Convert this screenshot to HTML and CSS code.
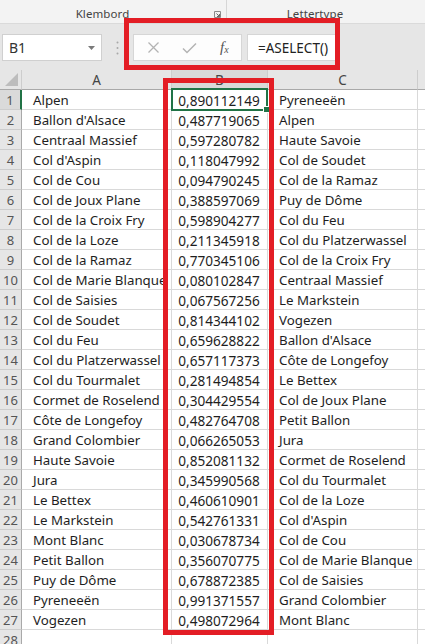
FILE: index.html
```html
<!DOCTYPE html>
<html lang="nl">
<head>
<meta charset="utf-8">
<title>Excel</title>
<link rel="stylesheet" href="styles.css">
</head>
<body>
<div class="app">
  <div class="ribbon">
    <div class="group g-clip">
      <span class="glabel">Klembord</span>
      <svg class="launcher" width="7" height="7" viewBox="0 0 7 7"><path d="M0.5 6.5V0.5H6.5V6.5Z" fill="none" stroke="#8a8a8a" stroke-width="1"/><path d="M2.5 2.5L5.5 5.5M5.5 3V5.5H3" fill="none" stroke="#6a6a6a" stroke-width="1"/></svg>
    </div>
    <div class="group g-font"><span class="glabel">Lettertype</span></div>
  </div>

  <div class="fbar">
    <div class="namebox">
      <span class="nb-text">B1</span>
      <svg class="nb-arrow" width="7" height="4" viewBox="0 0 7 4"><path d="M0 0H7L3.5 4Z" fill="#7a7a7a"/></svg>
    </div>
    <svg class="grip" width="3" height="14" viewBox="0 0 3 14"><circle cx="1.5" cy="1.5" r="1" fill="#a8a8a8"/><circle cx="1.5" cy="7" r="1" fill="#a8a8a8"/><circle cx="1.5" cy="12.5" r="1" fill="#a8a8a8"/></svg>
    <div class="fbtns">
      <svg class="fb-icon" width="13" height="13" viewBox="0 0 13 13"><path d="M1.5 1.5L11.5 11.5M11.5 1.5L1.5 11.5" stroke="#b3b3b3" stroke-width="1.3" fill="none"/></svg>
      <svg class="fb-icon" width="15" height="12" viewBox="0 0 15 12"><path d="M1 6.5L5 10.5L14 1.5" stroke="#b3b3b3" stroke-width="1.5" fill="none"/></svg>
      <span class="fx"><i>f</i><sub>x</sub></span>
    </div>
    <div class="finput">=ASELECT()</div>
  </div>

  <div class="sheet">
    <div class="corner"><svg width="13" height="13" viewBox="0 0 13 13"><path d="M13 0V13H0Z" fill="#bdbdbd"/></svg></div>
    <div class="colhead">A</div>
    <div class="colhead sel">B</div>
    <div class="colhead">C</div>
    <div class="colhead last"></div>

    <div class="rowhead sel">1</div><div class="cell txt">Alpen</div><div class="cell num active">0,890112149</div><div class="cell txt">Pyreneeën</div><div class="cell last"></div>
    <div class="rowhead">2</div><div class="cell txt">Ballon d'Alsace</div><div class="cell num">0,487719065</div><div class="cell txt">Alpen</div><div class="cell last"></div>
    <div class="rowhead">3</div><div class="cell txt">Centraal Massief</div><div class="cell num">0,597280782</div><div class="cell txt">Haute Savoie</div><div class="cell last"></div>
    <div class="rowhead">4</div><div class="cell txt">Col d'Aspin</div><div class="cell num">0,118047992</div><div class="cell txt">Col de Soudet</div><div class="cell last"></div>
    <div class="rowhead">5</div><div class="cell txt">Col de Cou</div><div class="cell num">0,094790245</div><div class="cell txt">Col de la Ramaz</div><div class="cell last"></div>
    <div class="rowhead">6</div><div class="cell txt">Col de Joux Plane</div><div class="cell num">0,388597069</div><div class="cell txt">Puy de Dôme</div><div class="cell last"></div>
    <div class="rowhead">7</div><div class="cell txt">Col de la Croix Fry</div><div class="cell num">0,598904277</div><div class="cell txt">Col du Feu</div><div class="cell last"></div>
    <div class="rowhead">8</div><div class="cell txt">Col de la Loze</div><div class="cell num">0,211345918</div><div class="cell txt">Col du Platzerwassel</div><div class="cell last"></div>
    <div class="rowhead">9</div><div class="cell txt">Col de la Ramaz</div><div class="cell num">0,770345106</div><div class="cell txt">Col de la Croix Fry</div><div class="cell last"></div>
    <div class="rowhead">10</div><div class="cell txt">Col de Marie Blanque</div><div class="cell num">0,080102847</div><div class="cell txt">Centraal Massief</div><div class="cell last"></div>
    <div class="rowhead">11</div><div class="cell txt">Col de Saisies</div><div class="cell num">0,067567256</div><div class="cell txt">Le Markstein</div><div class="cell last"></div>
    <div class="rowhead">12</div><div class="cell txt">Col de Soudet</div><div class="cell num">0,814344102</div><div class="cell txt">Vogezen</div><div class="cell last"></div>
    <div class="rowhead">13</div><div class="cell txt">Col du Feu</div><div class="cell num">0,659628822</div><div class="cell txt">Ballon d'Alsace</div><div class="cell last"></div>
    <div class="rowhead">14</div><div class="cell txt">Col du Platzerwassel</div><div class="cell num">0,657117373</div><div class="cell txt">Côte de Longefoy</div><div class="cell last"></div>
    <div class="rowhead">15</div><div class="cell txt">Col du Tourmalet</div><div class="cell num">0,281494854</div><div class="cell txt">Le Bettex</div><div class="cell last"></div>
    <div class="rowhead">16</div><div class="cell txt">Cormet de Roselend</div><div class="cell num">0,304429554</div><div class="cell txt">Col de Joux Plane</div><div class="cell last"></div>
    <div class="rowhead">17</div><div class="cell txt">Côte de Longefoy</div><div class="cell num">0,482764708</div><div class="cell txt">Petit Ballon</div><div class="cell last"></div>
    <div class="rowhead">18</div><div class="cell txt">Grand Colombier</div><div class="cell num">0,066265053</div><div class="cell txt">Jura</div><div class="cell last"></div>
    <div class="rowhead">19</div><div class="cell txt">Haute Savoie</div><div class="cell num">0,852081132</div><div class="cell txt">Cormet de Roselend</div><div class="cell last"></div>
    <div class="rowhead">20</div><div class="cell txt">Jura</div><div class="cell num">0,345990568</div><div class="cell txt">Col du Tourmalet</div><div class="cell last"></div>
    <div class="rowhead">21</div><div class="cell txt">Le Bettex</div><div class="cell num">0,460610901</div><div class="cell txt">Col de la Loze</div><div class="cell last"></div>
    <div class="rowhead">22</div><div class="cell txt">Le Markstein</div><div class="cell num">0,542761331</div><div class="cell txt">Col d'Aspin</div><div class="cell last"></div>
    <div class="rowhead">23</div><div class="cell txt">Mont Blanc</div><div class="cell num">0,030678734</div><div class="cell txt">Col de Cou</div><div class="cell last"></div>
    <div class="rowhead">24</div><div class="cell txt">Petit Ballon</div><div class="cell num">0,356070775</div><div class="cell txt">Col de Marie Blanque</div><div class="cell last"></div>
    <div class="rowhead">25</div><div class="cell txt">Puy de Dôme</div><div class="cell num">0,678872385</div><div class="cell txt">Col de Saisies</div><div class="cell last"></div>
    <div class="rowhead">26</div><div class="cell txt">Pyreneeën</div><div class="cell num">0,991371557</div><div class="cell txt">Grand Colombier</div><div class="cell last"></div>
    <div class="rowhead">27</div><div class="cell txt">Vogezen</div><div class="cell num">0,498072964</div><div class="cell txt">Mont Blanc</div><div class="cell last"></div>
    <div class="rowhead">28</div><div class="cell txt"></div><div class="cell num"></div><div class="cell txt"></div><div class="cell last"></div>
  </div>

  <div class="mark mark-formula"></div>
  <div class="mark mark-col"></div>
</div>
</body>
</html>
```

FILE: styles.css
```css
* { box-sizing: border-box; }
html, body { margin: 0; padding: 0; background: #ffffff; }
body { font-family: "Noto Sans", "Open Sans", sans-serif; color: #222; }

.app { position: relative; width: 425px; height: 644px; overflow: hidden; }

/* ribbon */
.ribbon {
  display: flex;
  height: 24px;
  background: #f3f3f3;
  border-bottom: 1px solid #dadada;
}
.group {
  position: relative;
  display: flex;
  align-items: center;
  justify-content: center;
  height: 23px;
}
.g-clip { width: 227px; border-right: 1px solid #d6d6d6; padding-right: 21px; }
.g-font { flex: 1; padding-right: 32px; padding-left: 10px; }
.glabel { font-size: 11.5px; color: #444; letter-spacing: 0.1px; padding-top: 3px; }
.launcher { position: absolute; right: 5px; top: 11px; }

/* formula bar */
.fbar {
  display: flex;
  align-items: center;
  height: 46px;
  background: #e6e6e6;
  padding-left: 2px;
  padding-top: 1px;
}
.namebox {
  display: flex;
  align-items: center;
  justify-content: space-between;
  width: 100px;
  height: 27px;
  background: #fff;
  border: 1px solid #d0d0d0;
  padding: 0 6px 0 6px;
}
.nb-text { font-size: 14px; color: #333; }
.grip { margin-left: 14px; }
.fbtns {
  display: flex;
  align-items: center;
  width: 109px;
  height: 27px;
  margin-left: 14px;
  background: #fdfdfd;
  border: 1px solid #d6d6d6;
  padding-left: 13px;
}
.fb-icon { flex: none; }
.fb-icon + .fb-icon { margin-left: 22px; }
.fx {
  margin-left: 23px;
  font-family: "Liberation Serif", "DejaVu Serif", serif;
  font-size: 15px;
  color: #555;
  line-height: 1;
}
.fx i { font-style: italic; }
.fx sub { font-size: 10px; font-style: italic; vertical-align: -1px; }
.finput {
  display: flex;
  align-items: center;
  width: 90px;
  height: 27px;
  margin-left: 5px;
  background: #fff;
  border: 1px solid #d6d6d6;
  padding-left: 10px;
  font-size: 13.5px;
  color: #222;
  white-space: nowrap;
}

/* sheet */
.sheet {
  display: grid;
  grid-template-columns: 22px 150px 96px 150px 1fr;
  grid-auto-rows: 20px;
  font-size: 13.3px;
}
.corner, .colhead {
  background: #e6e6e6;
  border-right: 1px solid #cdcdcd;
  border-bottom: 1px solid #a9a9a9;
}
.corner { display: flex; align-items: flex-end; justify-content: flex-end; padding: 0 3px 3px 0; }
.colhead {
  display: flex;
  align-items: center;
  justify-content: center;
  color: #444;
  padding-top: 1px;
  font-size: 13.5px;
}
.colhead.sel { background: #d9d9d9; border-bottom: 2px solid #217346; }
.colhead.last, .cell.last { border-right: none; }
.rowhead {
  display: flex;
  align-items: center;
  justify-content: center;
  background: #e6e6e6;
  border-right: 1px solid #a9a9a9;
  border-bottom: 1px solid #cdcdcd;
  color: #555;
  font-size: 13px;
}
.rowhead.sel { background: #dadada; border-right: 2px solid #217346; }
.cell {
  display: flex;
  align-items: center;
  border-right: 1px solid #d9d9d9;
  border-bottom: 1px solid #d9d9d9;
  white-space: nowrap;
  overflow: hidden;
  color: #1e1e1e;
  padding-top: 1px;
}
.cell.txt { padding-left: 11px; }
.cell.num { justify-content: center; padding-right: 1px; font-size: 13.6px; }
.cell.active { position: relative; overflow: visible; }
.cell.active::before {
  content: "";
  position: absolute;
  left: -1px; top: -2px; right: -1px; bottom: -2px;
  border: 2px solid #217346;
}
.cell.active::after {
  content: "";
  position: absolute;
  right: -3px; bottom: -4px;
  width: 5px; height: 5px;
  background: #217346;
  border: 1px solid #fff;
  box-sizing: content-box;
}

/* red annotation frames */
.mark { position: absolute; border: 5px solid #e31d25; }
.mark-formula { left: 124px; top: 18px; width: 216px; height: 52px; }
.mark-col { left: 163px; top: 78px; width: 111px; height: 557px; }
```
